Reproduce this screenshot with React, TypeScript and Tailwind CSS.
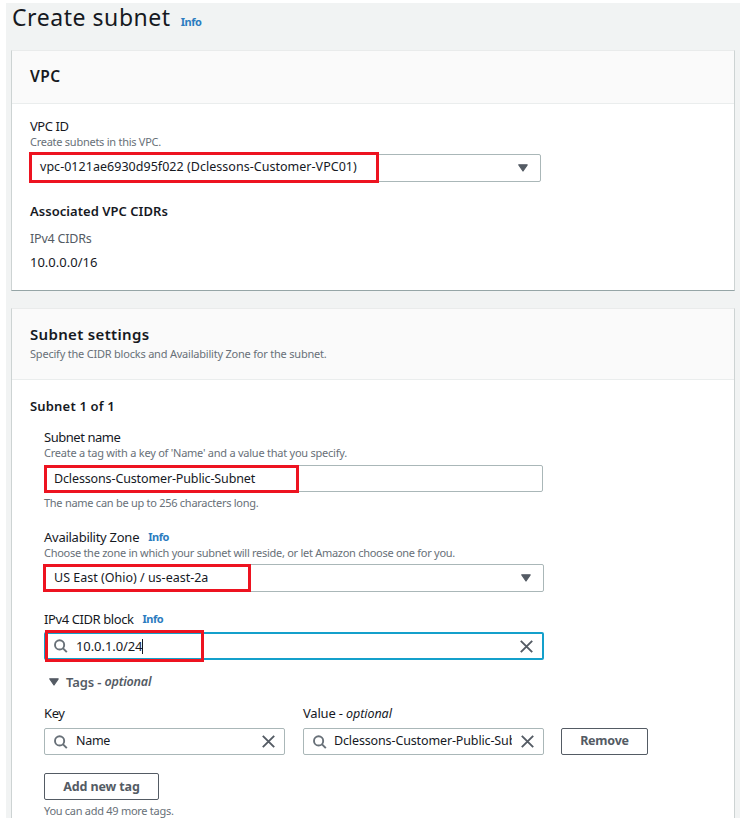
import type { ReactNode } from "react";

function Caret({ className = "" }: { className?: string }) {
  return (
    <svg viewBox="0 0 10 8" className={`h-[8px] w-[10px] shrink-0 ${className}`}>
      <path d="M0.8 0.8h8.4L5 7z" fill="#545b64" stroke="#545b64" strokeWidth="1.2" strokeLinejoin="round" />
    </svg>
  );
}

function SearchIcon() {
  return (
    <svg viewBox="0 0 14 14" className="h-[14px] w-[14px] shrink-0" fill="none" stroke="#687078" strokeWidth="1.9">
      <circle cx="5.6" cy="5.9" r="4.6" />
      <path d="M8.8 9.2l4 4" />
    </svg>
  );
}

function CloseIcon() {
  return (
    <svg viewBox="0 0 13 13" className="h-[13px] w-[13px] shrink-0" fill="none" stroke="#545b64" strokeWidth="1.9">
      <path d="M0.8 0.8l11.4 11.4M12.2 0.8L0.8 12.2" />
    </svg>
  );
}

function Hint({ className = "", children }: { className?: string; children: ReactNode }) {
  return <p className={`whitespace-nowrap text-[11px] leading-4 text-[#687078] ${className}`}>{children}</p>;
}

function Info({ className = "" }: { className?: string }) {
  return <a className={`text-[11px] font-bold tracking-[-0.45px] text-[#2b7cc0] ${className}`}>Info</a>;
}

function Highlight({ className }: { className: string }) {
  return <span className={`pointer-events-none absolute border-[3px] border-[#ed1320] ${className}`} />;
}

const field = "relative flex items-center rounded-[2px] border border-[#aab7b8] bg-white text-[12.5px] text-[#16191f]";

export default function App() {
  return (
    <div className="h-[818px] w-[740px] overflow-hidden bg-white pl-[6px] pt-[3px] font-['Noto_Sans','Open_Sans',sans-serif] text-[13px] leading-4 text-[#16191f]">
      <main className="h-[815px] bg-[#f1f3f3] pl-[5px] pr-[5px]">
        <header className="flex h-[47px] items-baseline pl-[1px]">
          <h1 className="whitespace-nowrap text-[23px] leading-[29px] tracking-[0.55px]">Create subnet</h1>
          <Info className="ml-[10px]" />
        </header>

        <section className="h-[241px] border border-b-[#95a5a6] border-l-[#cdd3d3] border-r-[#cdd3d3] border-t-[#e9ebeb] bg-white">
          <div className="flex h-[53px] items-center border-b border-[#eaeded] bg-[#fafafa] pb-[2px] pl-[18px]">
            <h2 className="text-[15.5px] font-semibold tracking-[0.5px]">VPC</h2>
          </div>
          <div className="pl-[18px] pt-[14px]">
            <p className="tracking-[-0.44px]">VPC ID</p>
            <Hint className="tracking-[-0.26px]">Create subnets in this VPC.</Hint>
            <div className={`${field} mt-[4px] h-7 w-[511px] justify-between pl-[9px] pr-[12px]`}>
              <span className="-mt-[2px] tracking-[0.03px]">vpc-0121ae6930d95f022 (Dclessons-Customer-VPC01)</span>
              <Caret />
              <Highlight className="-left-[2px] -top-[3px] h-[31px] w-[350px]" />
            </div>
            <h3 className="mt-[21px] font-semibold tracking-[0.04px]">Associated VPC CIDRs</h3>
            <p className="mt-[12px] text-[12.5px] tracking-[-0.21px] text-[#545b64]">IPv4 CIDRs</p>
            <p className="mt-[7px]">10.0.0.0/16</p>
          </div>
        </section>

        <section className="mt-[17px] h-[530px] border border-l-[#cdd3d3] border-r-[#cdd3d3] border-t-[#e9ebeb] bg-white">
          <div className="h-[71px] border-b border-[#eaeded] bg-[#fafafa] pl-[18px] pt-[15px]">
            <h2 className="text-[15px] font-semibold leading-5 tracking-[0.33px]">Subnet settings</h2>
            <Hint className="mt-[2px] tracking-[-0.21px]">Specify the CIDR blocks and Availability Zone for the subnet.</Hint>
          </div>
          <div className="pl-[18px] pt-[18px]">
            <h3 className="font-semibold tracking-[0.18px]">Subnet 1 of 1</h3>
            <div className="ml-[14px] mt-[15px]">
              <p className="tracking-[-0.46px]">Subnet name</p>
              <Hint className="tracking-[-0.24px]">Create a tag with a key of 'Name' and a value that you specify.</Hint>
              <div className={`${field} mt-[4px] h-[27px] w-[499px] pl-[9px]`}>
                <span className="tracking-[-0.13px]">Dclessons-Customer-Public-Subnet</span>
                <Highlight className="-left-[1px] -top-[1px] h-[28px] w-[255px]" />
              </div>
              <Hint className="mt-[3px] tracking-[-0.27px]">The name can be up to 256 characters long.</Hint>

              <p className="mt-[18px] flex items-center">
                <span className="tracking-[-0.26px]">Availability Zone</span>
                <Info className="ml-[9px]" />
              </p>
              <Hint className="tracking-[-0.28px]">Choose the zone in which your subnet will reside, or let Amazon choose one for you.</Hint>
              <div className={`${field} mt-[3px] h-7 w-[500px] justify-between pl-[9px] pr-[12px]`}>
                <span>US East (Ohio) / us-east-2a</span>
                <Caret />
                <Highlight className="-left-[2px] -top-[1px] h-[28px] w-[208px]" />
              </div>

              <p className="mt-[19px] flex items-center">
                <span className="tracking-[-0.41px]">IPv4 CIDR block</span>
                <Info className="ml-[9px]" />
              </p>
              <div className="relative mt-[5px] flex h-[28px] w-[500px] items-center rounded-[2px] border-2 border-[#14a0cb] bg-white pl-[8px] pr-[9px]">
                <SearchIcon />
                <span className="ml-[8px] tracking-[-0.08px]">10.0.1.0/24</span>
                <span className="h-[15px] w-px bg-[#16191f]" />
                <span className="flex-1" />
                <CloseIcon />
                <Highlight className="-left-[1px] -top-[4px] h-[32px] w-[159px]" />
              </div>

              <div className="mt-[14px] flex items-center font-semibold text-[#545b64]">
                <Caret className="ml-[5px]" />
                <span className="ml-[7px] whitespace-pre tracking-[-0.13px]">Tags - </span>
                <i className="text-[12.5px] tracking-[-0.2px]">optional</i>
              </div>

              <div className="mt-[15px] flex">
                <div className="w-[241px]">
                  <p className="h-4 tracking-[-0.42px]">Key</p>
                  <div className={`${field} mt-[7px] h-[27px] pl-[9px] pr-[9px]`}>
                    <SearchIcon />
                    <span className="-mt-px ml-[8px] flex-1 tracking-[-0.3px]">Name</span>
                    <CloseIcon />
                  </div>
                </div>
                <div className="ml-[18px] w-[241px]">
                  <p className="h-4 whitespace-pre tracking-[-0.19px]">
                    Value - <i className="text-[12.5px] tracking-[-0.05px]">optional</i>
                  </p>
                  <div className={`${field} mt-[7px] h-[27px] pl-[9px] pr-[9px]`}>
                    <SearchIcon />
                    <span className="-mt-px ml-[7px] w-[178px] overflow-hidden whitespace-nowrap tracking-[-0.13px]">Dclessons-Customer-Public-Subnet</span>
                    <span className="flex-1" />
                    <CloseIcon />
                  </div>
                </div>
                <button className="ml-[17px] mt-[23px] h-[27px] w-[87px] rounded-[2px] border border-[#545b64] pb-px text-[12.5px] font-bold tracking-[-0.22px] text-[#545b64]">
                  Remove
                </button>
              </div>

              <button className="mt-[18px] block h-[27px] w-[115px] rounded-[2px] border border-[#545b64] text-[12.5px] font-bold tracking-[-0.12px] text-[#545b64]">
                Add new tag
              </button>
              <Hint className="mt-[3px] tracking-[-0.28px]">You can add 49 more tags.</Hint>
            </div>
          </div>
        </section>
      </main>
    </div>
  );
}
